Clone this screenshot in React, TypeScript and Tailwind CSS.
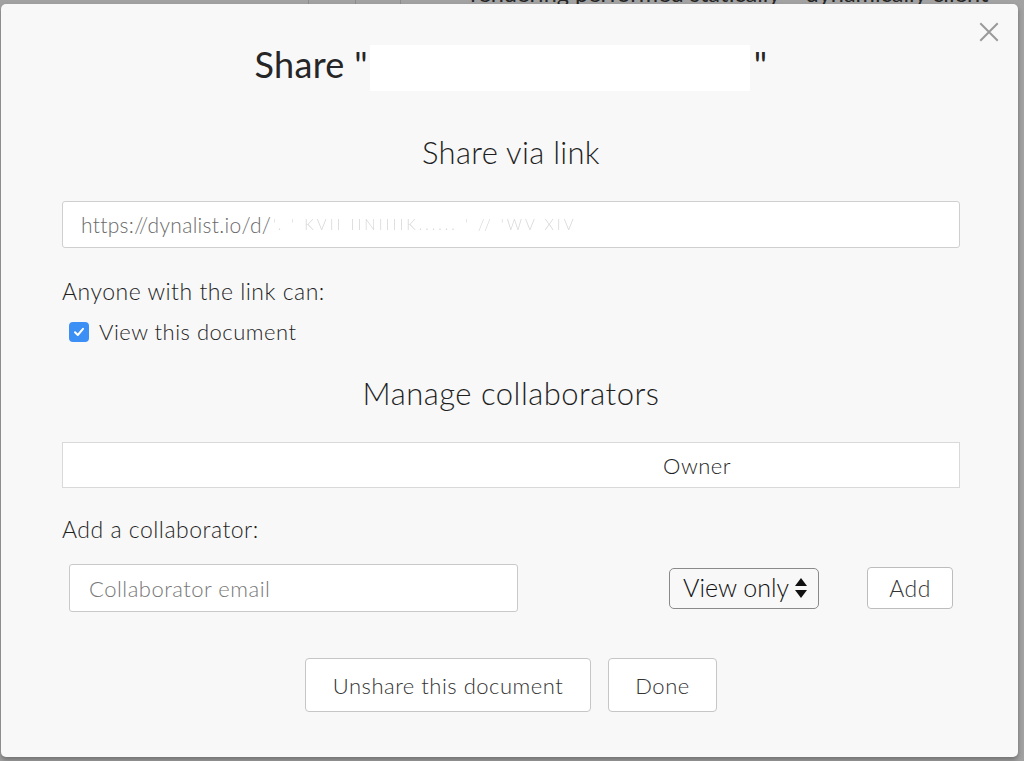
import React from "react";

const font = { fontFamily: "Lato, 'Open Sans', 'Noto Sans', sans-serif" };

function Background() {
  return (
    <div className="absolute inset-0 bg-[#a2a2a2]">
      <div className="absolute left-[308px] top-0 h-[6px] w-px bg-[#8c8c8c]" />
      <div className="absolute left-[355px] top-0 h-[6px] w-px bg-[#8c8c8c]" />
      <div className="absolute left-[400px] top-0 h-[6px] w-px bg-[#8c8c8c]" />
      <div className="absolute left-[443px] top-[-22px] flex items-center gap-[18px] text-[23.5px] leading-[30px] text-[#262626]">
        <span className="text-[16px]">•</span>
        <span>rendering performed statically + dynamically client-side rendering</span>
      </div>
    </div>
  );
}

function CloseIcon() {
  return (
    <svg width="20" height="20" viewBox="0 0 20 20" className="absolute right-[19px] top-[18px]">
      <path d="M2 2 L18 18 M18 2 L2 18" stroke="#9a9a9a" strokeWidth="2" strokeLinecap="square" />
    </svg>
  );
}

export default function App() {
  return (
    <div className="relative h-[761px] w-[1024px] overflow-hidden" style={font}>
      <Background />
      <div className="relative z-10 ml-[1px] mt-[4px] flex h-[753px] w-[1017px] flex-col rounded-[5px] bg-[#f8f8f8] pl-[61px] pr-[58px] pt-[37px] font-light tracking-[0.5px] text-[#1f1f1f] shadow-[0_3px_5px_rgba(0,0,0,0.3)]">
        <CloseIcon />
        {/* Title */}
        <div className="flex h-[50px] items-start justify-center tracking-[0.3px]">
          <span className="text-[36px] font-normal leading-[46px] text-[#262626]">Share "</span>
          <span className="ml-[2px] mt-[4px] h-[46px] w-[380px] bg-white" />
          <span className="ml-[4px] text-[36px] font-normal leading-[46px] text-[#262626]">"</span>
        </div>

        <div className="mt-[43px] text-center text-[31px] leading-[36px] tracking-[0.3px]">Share via link</div>

        <div className="mt-[31px] flex h-[47px] items-center rounded-[3px] border border-[#cfcfcf] bg-white pl-[18px] text-[21px] tracking-[0.3px] text-[#6a6a6a]">
          <span>https://dynalist.io/d/</span>
          <span className="ml-[2px] text-[15px] tracking-[3px] text-[#d8d8d8] blur-[0.6px]">'. ' KVII IINIIIIK...... ' // 'WV XIV</span>
        </div>

        <div className="mt-[28px] text-[23px] leading-[30px]">Anyone with the link can:</div>

        <div className="mt-[11px] flex h-[30px] items-center pl-[7px]">
          <span className="flex h-[20px] w-[20px] items-center justify-center rounded-[4px] bg-[#3c8ff5]">
            <svg width="14" height="14" viewBox="0 0 14 14">
              <path d="M3 7.2 L5.8 10 L11 3.8" stroke="white" strokeWidth="2" fill="none" strokeLinecap="round" strokeLinejoin="round" />
            </svg>
          </span>
          <span className="ml-[10px] text-[22px] leading-[30px]">View this document</span>
        </div>

        <div className="mt-[28px] text-center text-[31px] leading-[36px]">Manage collaborators</div>

        <div className="mt-[31px] flex h-[46px] items-center border border-[#d9d9d9] bg-white">
          <span className="w-[600px]" />
          <span className="text-[22px] text-[#1f1f1f]">Owner</span>
        </div>

        <div className="mt-[26px] text-[23px] leading-[30px]">Add a collaborator:</div>

        <div className="mt-[20px] flex h-[48px] items-center">
          <div className="ml-[7px] flex h-[48px] w-[449px] items-center rounded-[3px] border border-[#c9c9c9] bg-white pl-[19px] text-[22px] text-[#777]">
            Collaborator email
          </div>
          <div className="ml-[151px] flex h-[41px] w-[150px] items-center rounded-[5px] border border-[#8a8a8a] bg-[#f8f8f8] pl-[13px] text-[25px] tracking-normal text-[#111]">
            <span>View only</span>
            <svg width="14" height="22" viewBox="0 0 14 22" className="ml-[5px]">
              <path d="M7 1 L13 9 L1 9 Z" fill="#111" />
              <path d="M1 13 L13 13 L7 21 Z" fill="#111" />
            </svg>
          </div>
          <div className="ml-[48px] flex h-[42px] w-[86px] items-center justify-center rounded-[4px] border border-[#bdbdbd] bg-white text-[23px] text-[#333]">
            Add
          </div>
        </div>

        <div className="mt-[46px] flex justify-center gap-[17px]">
          <div className="flex h-[54px] w-[286px] items-center justify-center rounded-[4px] border border-[#c6c6c6] bg-white text-[22px] text-[#333]">
            Unshare this document
          </div>
          <div className="flex h-[54px] w-[109px] items-center justify-center rounded-[4px] border border-[#c6c6c6] bg-white text-[22px] text-[#333]">
            Done
          </div>
        </div>
      </div>
    </div>
  );
}
